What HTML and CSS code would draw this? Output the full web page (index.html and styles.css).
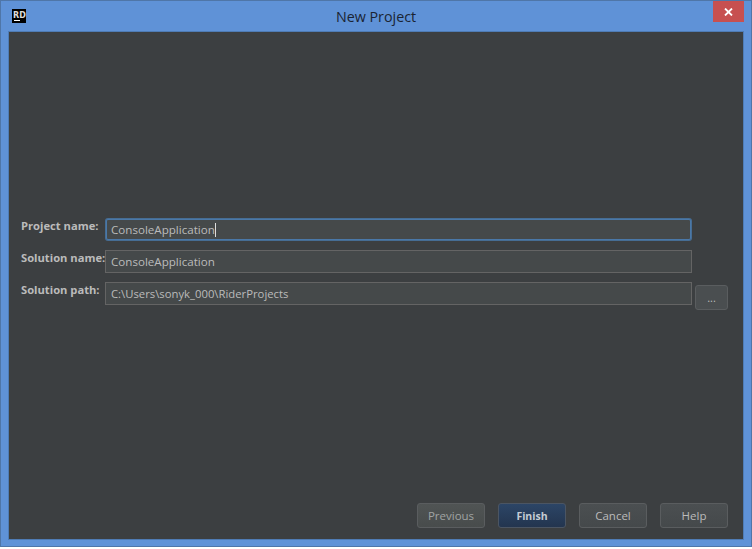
FILE: index.html
```html
<!DOCTYPE html>
<html lang="en">
<head>
<meta charset="utf-8">
<title>New Project</title>
<link rel="stylesheet" href="styles.css">
</head>
<body>
<div class="window">
  <header class="titlebar">
    <svg class="logo" width="14" height="14" viewBox="0 0 14 14"><rect width="14" height="14" fill="#000"/><rect x="2" y="11" width="6" height="1" fill="#fff"/><text x="1" y="8.5" class="logo-text">RD</text></svg>
    <div class="title">New Project</div>
    <div class="close"><svg width="9" height="8" viewBox="0 0 9 8"><path d="M1 0.5L8 7.5M8 0.5L1 7.5" stroke="#fff" stroke-width="1.8" fill="none"/></svg></div>
  </header>
  <main class="content">
    <div class="form">
      <div class="row">
        <label class="label">Project name:</label>
        <div class="input focused">ConsoleApplication<span class="caret"></span></div>
      </div>
      <div class="row">
        <label class="label">Solution name:</label>
        <div class="input">ConsoleApplication</div>
      </div>
      <div class="row">
        <label class="label">Solution path:</label>
        <div class="input path">C:\Users\sonyk_000\RiderProjects</div>
        <button class="browse">...</button>
      </div>
    </div>
    <footer class="actions">
      <button class="btn muted">Previous</button>
      <button class="btn primary">Finish</button>
      <button class="btn">Cancel</button>
      <button class="btn">Help</button>
    </footer>
  </main>
</div>
</body>
</html>
```
FILE: styles.css
```css
* { box-sizing: border-box; }
html, body { margin: 0; padding: 0; background: #fff; }
body { width: 752px; height: 549px; font-family: "Open Sans", "DejaVu Sans", sans-serif; font-size: 11.2px; color: #bbb; }
.window {
  width: 752px; height: 547px; background: #5f92d7;
  border: 1px solid #4f76a8; padding: 0 7px 6px 7px;
  display: flex; flex-direction: column;
}
.titlebar { height: 30px; flex: none; position: relative; display: flex; align-items: center; justify-content: center; }
.logo { position: absolute; left: 4px; top: 8px; }
.logo-text { font-family: "DejaVu Sans", sans-serif; font-size: 8px; font-weight: 700; fill: #ddd; }
.title { font-family: "Open Sans", sans-serif; font-size: 14.3px; color: #1a2433; }
.close { position: absolute; right: 0; top: 0; width: 31px; height: 21px; background: #c75050; display: flex; align-items: center; justify-content: center; }
.content { flex: 1; background: #3c3f41; border: 1px solid #4f7cb5; display: flex; flex-direction: column; padding: 186px 15px 11px 12px; }
.form { display: flex; flex-direction: column; gap: 10px; flex: 1; }
.row { display: flex; height: 22px; }
.label { width: 84px; flex: none; font-weight: 700; color: #bbb; line-height: 15px; white-space: nowrap; }
.input { width: 587px; height: 23px; flex: none; background: #45494a; border: 1px solid #646464; padding-left: 5px; line-height: 21px; font-size: 11.6px; color: #bbb; white-space: nowrap; }
.path { font-size: 11.3px; }
.focused { border-color: #4a78a8; box-shadow: 0 0 0 1px #466d94; border-radius: 2px; width: 585px; margin-left: 1px; padding-left: 4px; height: 21px; line-height: 19px; margin-top: 1px; }
.caret { display: inline-block; width: 1px; height: 14px; background: #ddd; vertical-align: -3px; }
.browse { margin: 3px 0 0 3px; width: 33px; height: 25px; background: #4a4e50; border: 1px solid #5a5d5f; border-radius: 3px; color: #bbb; font: 11px "Open Sans", sans-serif; padding: 0; flex: none; }
.actions { display: flex; justify-content: flex-end; gap: 13px; }
.btn { width: 68px; height: 25px; border: 1px solid #5a5d5f; border-radius: 3px; background: linear-gradient(#4b4f51, #45494b); color: #bbb; font: 11.5px "Open Sans", sans-serif; padding: 0; }
.muted { color: #a0a4a3; background: linear-gradient(#505454, #484c4c); }
.primary { font-weight: 700; font-size: 10.5px; background: linear-gradient(#2c4566, #23354f); border-color: #4b5563; color: #c5ccd4; }
```
